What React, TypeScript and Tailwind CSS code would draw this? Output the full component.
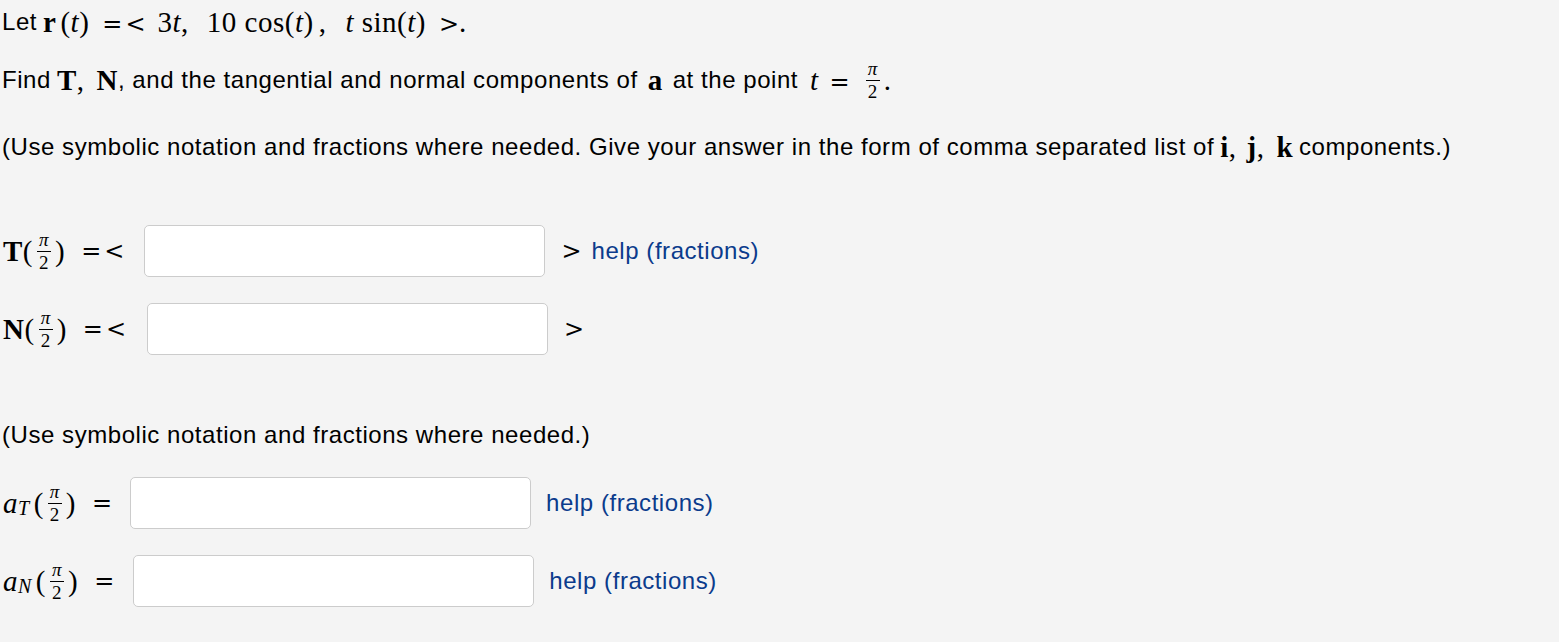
import React from 'react'

const serif = { fontFamily: '"Liberation Serif", "DejaVu Serif", serif' }
const relFont = { fontFamily: '"DejaVu Serif", "Liberation Serif", serif' }

function Frac() {
  return (
    <span className="inline-flex flex-col items-center align-middle mx-[4px] leading-none text-[19px]" style={serif}>
      <span className="italic px-[2px]">π</span>
      <span className="block w-full h-px bg-black mt-[2px] mb-[1px]" />
      <span>2</span>
    </span>
  )
}

function M({ children, className = '' }: { children: React.ReactNode; className?: string }) {
  return (
    <span className={`text-[29px] tracking-[0.5px] whitespace-nowrap ${className}`} style={serif}>
      {children}
    </span>
  )
}

// relation symbols (= < >) drawn a bit wider, like the TeX font
function Rel({ children, className = '' }: { children: React.ReactNode; className?: string }) {
  return (
    <span className={`text-[24px] font-light tracking-normal ${className}`} style={relFont}>
      {children}
    </span>
  )
}

function Field() {
  return <input className="w-[401px] h-[52px] bg-white border border-[#cccccc] rounded-[5px] outline-none" />
}

function Help() {
  return <a className="text-[#0b3b8c] cursor-pointer">help (fractions)</a>
}

export default function App() {
  return (
    <div
      className="w-[1559px] h-[642px] bg-[#f4f4f4] text-black text-[24px] tracking-[0.55px] leading-none"
      style={{ fontFamily: '"Liberation Sans", Arial, sans-serif' }}
    >
      <div className="flex items-center h-[42px] pt-[2px] pl-[2px]">
        <span>Let</span>
        <M className="ml-[6px]">
          <b>r</b>
          <span className="ml-[4px]">(</span>
          <i>t</i>)
          <Rel className="ml-[13px]">=</Rel>
          <Rel className="ml-[3px]">&lt;</Rel>
          <span className="ml-[12px]">3<i>t</i>,</span>
          <span className="ml-[18px]">10 cos(<i>t</i>)</span>
          <span className="ml-[5px]">,</span>
          <span className="ml-[19px]"><i>t</i> sin(<i>t</i>)</span>
          <Rel className="ml-[13px]">&gt;</Rel>.
        </M>
      </div>

      <div className="flex items-center h-[72px] mt-[2px] pl-[2px]">
        <span>Find</span>
        <M className="ml-[6px]"><b>T</b>,<span className="ml-[12px]"><b>N</b></span></M>
        <span>, and the tangential and normal components of</span>
        <M className="ml-[10px]"><b>a</b></M>
        <span className="ml-[10px]">at the point</span>
        <M className="ml-[12px]"><i>t</i><Rel className="ml-[11px] mr-[12px]">=</Rel></M>
        <Frac />
        <M>.</M>
      </div>

      <div className="flex items-center h-[62px] pl-[2px]">
        <span>(Use symbolic notation and fractions where needed. Give your answer in the form of comma separated list of</span>
        <M className="ml-[6px]"><b>i</b>,<span className="ml-[10px]"><b>j</b>,</span><span className="ml-[12px]"><b>k</b></span></M>
        <span className="ml-[6px]">components.)</span>
      </div>

      <div className="flex flex-col gap-[26px] mt-[47px] pl-[3px]">
        <div className="flex items-center">
          <M className="flex items-center">
            <b>T</b>(<Frac />)
            <Rel className="ml-[16px]">=</Rel>
            <Rel className="ml-[3px]">&lt;</Rel>
          </M>
          <span className="ml-[20px]"><Field /></span>
          <Rel className="ml-[16px]">&gt;</Rel>
          <span className="ml-[10px]"><Help /></span>
        </div>
        <div className="flex items-center">
          <M className="flex items-center">
            <b>N</b>(<Frac />)
            <Rel className="ml-[16px]">=</Rel>
            <Rel className="ml-[3px]">&lt;</Rel>
          </M>
          <span className="ml-[21px]"><Field /></span>
          <Rel className="ml-[16px]">&gt;</Rel>
        </div>
      </div>

      <div className="mt-[67px] h-[26px] flex items-center pl-[2px]">(Use symbolic notation and fractions where needed.)</div>

      <div className="flex flex-col gap-[26px] mt-[29px] pl-[3px]">
        <div className="flex items-center">
          <M className="flex items-center">
            <i>a</i><i className="text-[20px] mt-[10px]">T</i>
            <span className="ml-[4px]">(</span><Frac />)
            <Rel className="ml-[16px]">=</Rel>
          </M>
          <span className="ml-[18px]"><Field /></span>
          <span className="ml-[15px]"><Help /></span>
        </div>
        <div className="flex items-center">
          <M className="flex items-center">
            <i>a</i><i className="text-[20px] mt-[10px]">N</i>
            <span className="ml-[4px]">(</span><Frac />)
            <Rel className="ml-[16px]">=</Rel>
          </M>
          <span className="ml-[19px]"><Field /></span>
          <span className="ml-[15px]"><Help /></span>
        </div>
      </div>
    </div>
  )
}
